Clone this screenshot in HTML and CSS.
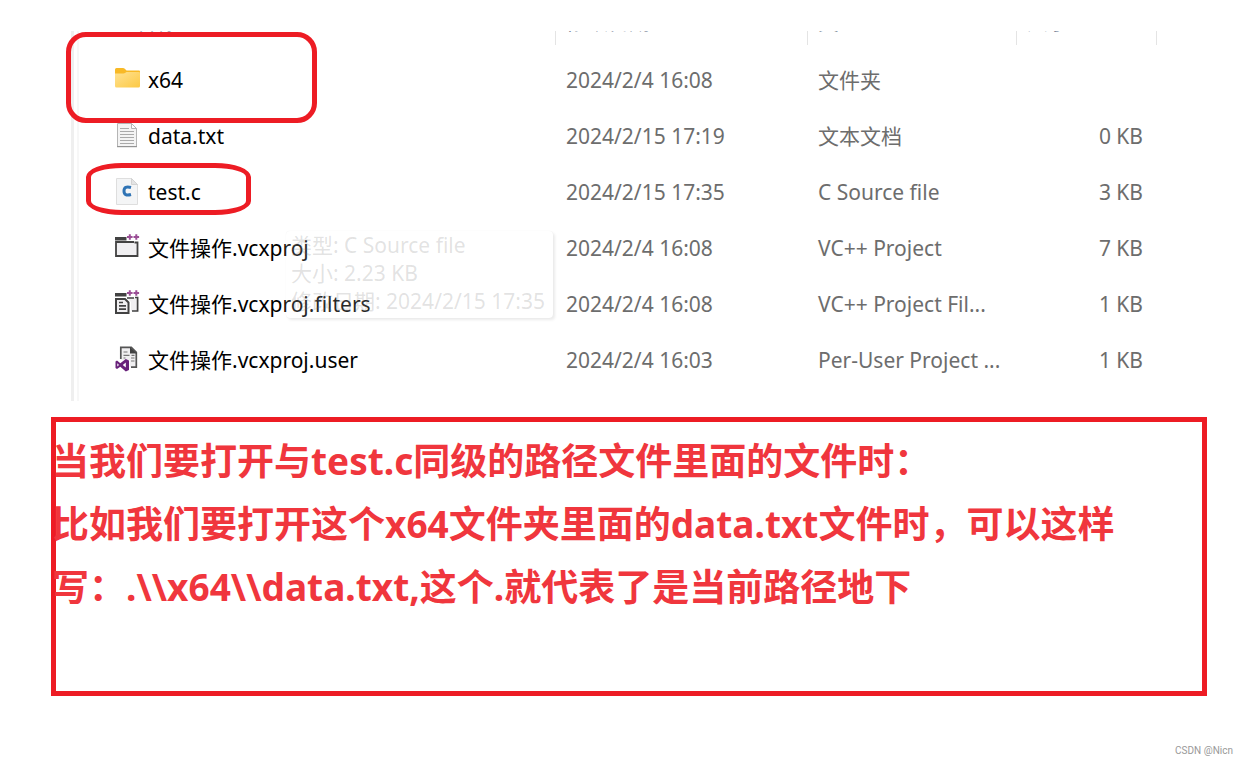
FILE: index.html
```
<!DOCTYPE html>
<html lang="zh-CN">
<head>
<meta charset="utf-8">
<title>文件操作</title>
<link rel="stylesheet" href="styles.css">
</head>
<body>
<main>
<section class="file-list">
  <table class="files">
    <colgroup><col class="col-name"><col class="col-date"><col class="col-type"><col class="col-size"></colgroup>
    <thead>
      <tr>
        <th scope="col"><div class="head">名称</div></th>
        <th scope="col"><div class="head">修改日期</div></th>
        <th scope="col"><div class="head">类型</div></th>
        <th scope="col"><div class="head">大小</div></th>
      </tr>
    </thead>
    <tbody>
      <tr>
        <td class="name"><div class="file">
          <svg class="icon" viewBox="0 0 26 28"><defs><linearGradient id="folder" x1="0" y1="0" x2="1" y2="1"><stop offset="0" stop-color="#ffe293"/><stop offset="1" stop-color="#fcc944"/></linearGradient></defs><path d="M0 3.500q0-1.500 1.500-1.500h6.500q1 0 1.800.8L11.500 4.500H24q1 0 1 1V12H0z" fill="#f8b926"/><path d="M0 7.500h8.500q1 0 1.800-.7L11.500 6H24q1 0 1 1v13q0 1.500-1.500 1.500h-22Q0 21.500 0 20z" fill="url(#folder)"/></svg>
          <span>x64</span></div></td>
        <td>2024/2/4 16:08</td><td>文件夹</td><td class="size"></td>
      </tr>
      <tr>
        <td class="name"><div class="file">
          <svg class="icon" viewBox="0 0 26 28"><path d="M2.500 1.500h14l5 5v18h-19z" fill="#f4f4f4" stroke="#b5b5b5"/><path d="M16.500 1.500v5h5z" fill="#fff" stroke="#b5b5b5"/><path d="M5 6.500h9M5 9.500h14M5 12.500h14M5 15.500h14M5 18.500h14M5 21.500h14" stroke="#aaa" fill="none"/><path d="M2 24.700h20" stroke="#8d8d8d"/></svg>
          <span>data.txt</span></div></td>
        <td>2024/2/15 17:19</td><td>文本文档</td><td class="size">0 KB</td>
      </tr>
      <tr>
        <td class="name"><div class="file">
          <svg class="icon" viewBox="0 0 26 28"><path d="M1.500.5h15l6 6v20h-21z" fill="#f4f5f6" stroke="#dedede"/><path d="M16.500.5v6h6z" fill="#e4e4e4" stroke="#d3d3d3"/><path d="M16 9.500Q9 7.500 9 13t7 3.500" fill="none" stroke="#2f74b5" stroke-width="3"/></svg>
          <span>test.c</span></div></td>
        <td>2024/2/15 17:35</td><td>C Source file</td><td class="size">3 KB</td>
      </tr>
      <tr>
        <td class="name"><div class="file">
          <svg class="icon" viewBox="0 0 26 28"><path d="M0 3h11.500v3.500H0z" fill="#424242"/><path d="M1 8h21.600v14H1z" fill="#f0eff1"/><path d="M19.500 8.500h3V22H1V8h18" fill="none" stroke="#424242" stroke-width="1.800"/><path d="M12 3h5.600M14.800.2v5.600M18.500 3h5.600M21.300.2v5.600" stroke="#9b4f96" stroke-width="2"/></svg>
          <span>文件操作.vcxproj</span></div></td>
        <td>2024/2/4 16:08</td><td>VC++ Project</td><td class="size">7 KB</td>
      </tr>
      <tr>
        <td class="name"><div class="file">
          <svg class="icon" viewBox="0 0 26 28"><path d="M0 3h11.500v3.500H0z" fill="#424242"/><path d="M12 8h10v13h-6v-9z" fill="#f0eff1"/><path d="M12 8h7M20 7.500h2.600V21H17" fill="none" stroke="#424242" stroke-width="1.700"/><path d="M1 9h9l3.500 3.500V23H1z" fill="#f0eff1" stroke="#424242" stroke-width="2"/><path d="M4 12.500h4M4 15.800h7M4 19.200h7" stroke="#424242" stroke-width="1.700"/><path d="M12 3h5.600M14.800.2v5.600M18.500 3h5.600M21.300.2v5.600" stroke="#9b4f96" stroke-width="2"/></svg>
          <span>文件操作.vcxproj.filters</span></div></td>
        <td>2024/2/4 16:08</td><td>VC++ Project Fil...</td><td class="size">1 KB</td>
      </tr>
      <tr>
        <td class="name"><div class="file">
          <svg class="icon" viewBox="0 0 26 28"><path d="M5.800 14V1.300h10.500l5 5v14.900H15V14z" fill="#f0eff1"/><path d="M5.800 13V1.300h10.500l5 5v14.900H16" fill="none" stroke="#555" stroke-width="1.700"/><path d="M15 1v6.500h7z" fill="#424242"/><path d="M8.500 6h4M8.500 9.300h6M16.500 9.300h3M8.500 12h2M16 12h3.500M16 15h3.500" stroke="#777" stroke-width="1.200"/><path fill-rule="evenodd" d="M10.800 13l3.200 1.500v9.500L10.800 25.500l-5.500-4.800L2 23 .5 22v-6.500L2 14.500l3.300 2.800zM10.800 16.500L7.800 19l3 2.500zM2.300 17.300v3.200L4 19z" fill="#68217a"/></svg>
          <span>文件操作.vcxproj.user</span></div></td>
        <td>2024/2/4 16:03</td><td>Per-User Project ...</td><td class="size">1 KB</td>
      </tr>
    </tbody>
  </table>
  <div class="tooltip" role="tooltip">类型: C Source file<br>大小: 2.23 KB<br>修改日期: 2024/2/15 17:35</div>
  <div class="ring ring-folder"></div>
  <div class="ring ring-source"></div>
</section>
<section class="note">
  <p>当我们要打开与test.c同级的路径文件里面的文件时：<br>比如我们要打开这个x64文件夹里面的data.txt文件时，可以这样<br>写：.\\x64\\data.txt,这个.就代表了是当前路径地下</p>
</section>
</main>
<footer class="credit">CSDN @Nicn</footer>
</body>
</html>
```
FILE: styles.css
```
* { box-sizing: border-box; }
body {
  margin: 0;
  background: #fff;
  font-family: "Noto Sans", "Noto Sans CJK SC", sans-serif;
  font-size: 21px;
  line-height: 28px;
  color: #6d6d6d;
}
main { padding: 31px 40px 0 51px; }
.file-list {
  position: relative;
  margin: 0 50px 0 20px;
  padding: 0 0 13px 3px;
  border-left: 3px solid #efefef;
}
.files {
  width: 100%;
  border-collapse: collapse;
  table-layout: fixed;
}
.file-list::before {
  content: "";
  position: absolute;
  top: 0;
  bottom: 0;
  left: 3px;
  width: 2px;
  background: #f7f7f7;
}
.col-date { width: 252px; }
.col-type { width: 209px; }
.col-size { width: 140px; }
th { padding: 0 0 7px; font-weight: 400; }
.head {
  display: flex;
  align-items: flex-end;
  height: 14px;
  padding: 0 0 11px 10px;
  border-right: 1px solid #e4e4e4;
  overflow: hidden;
  line-height: 26px;
  color: #5c6b80;
}
th:first-child .head { padding-left: 58px; }
td {
  height: 56px;
  padding: 0 0 0 10px;
  white-space: nowrap;
}
td.name { padding-left: 38px; color: #000; }
td.size { padding: 0 14px 0 0; text-align: right; }
.file { display: flex; align-items: center; gap: 7px; }
.icon { width: 26px; height: 28px; flex: none; }
.tooltip {
  position: absolute;
  top: 200px;
  left: 212px;
  padding: 0 8px 3px 5px;
  border-radius: 4px;
  background: rgba(255, 255, 255, 0.15);
  box-shadow: 0 0 1px #e8e8e8, 2px 2px 3px #ebebeb;
  color: rgba(110, 110, 110, 0.2);
  white-space: nowrap;
}
.ring { position: absolute; border: 5px solid #ed1c24; }
.ring-folder {
  top: 1px;
  left: -8px;
  width: 251px;
  height: 91px;
  border-radius: 20px;
}
.ring-source {
  top: 132px;
  left: 12px;
  width: 165px;
  height: 52px;
  border-radius: 36px / 14px;
}
.note {
  margin-top: 16px;
  padding: 7px 0 73px;
  border: 5px solid #ed1c24;
}
.note p {
  margin: 0 0 0 -4px;
  font-size: 37px;
  font-weight: 700;
  line-height: 63px;
  color: #f0363d;
}
.credit {
  padding: 46px 14px 0 0;
  font-family: Roboto, sans-serif;
  font-size: 10px;
  line-height: 18px;
  text-align: right;
  color: #999;
}
```
